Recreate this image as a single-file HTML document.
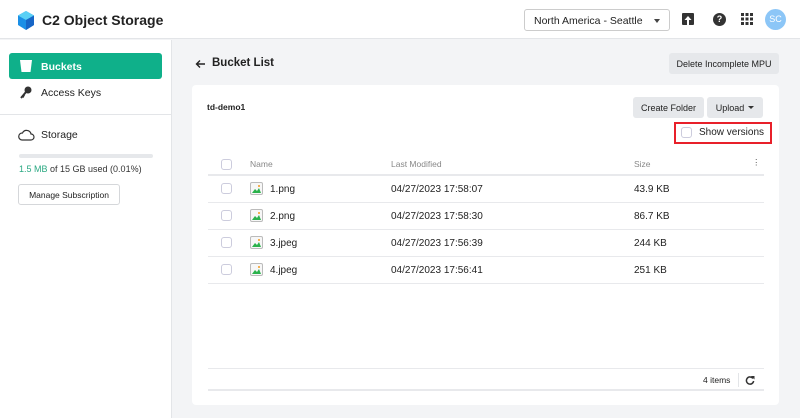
<!DOCTYPE html>
<html><head><style>
*{box-sizing:border-box;margin:0;padding:0}
body{width:800px;height:418px;overflow:hidden;font-family:"Liberation Sans",sans-serif;background:#f3f4f6;position:relative;color:#222}
.abs{position:absolute}
.hdr{left:0;top:0;width:800px;height:39px;background:#fff;border-bottom:1px solid #e3e5e8}
.side{left:0;top:40px;width:172px;height:378px;background:#fff;border-right:1px solid #e3e5e8}
.btn{background:#e6e8eb;border-radius:3px;font-size:9px;color:#222;display:flex;align-items:center;justify-content:center}
.cb{width:11px;height:11px;border:1px solid #ccd;border-radius:3px;background:#fff}
.row{left:208px;width:556px;height:27px;border-bottom:1px solid #e8e9ec;font-size:10px}
.row span{position:absolute;top:8px}
.ic{width:13px;height:13px;border:1px solid #bbb;border-radius:2px;background:#f7f7f7}
</style></head><body>
<div class="abs hdr"></div>
<svg class="abs" style="left:17px;top:11px" width="18" height="19" viewBox="0 0 18 19"><polygon points="9,0 17,4.5 17,14 9,19 1,14 1,4.5" fill="#1b8fe6"/><polygon points="9,0 17,4.5 9,9 1,4.5" fill="#5ad0f5"/><polygon points="9,9 17,4.5 17,14 9,19" fill="#1766c7"/></svg>
<div class="abs" style="left:42px;top:12px;font-size:14px;font-weight:bold;color:#222">C2 Object Storage</div>
<div class="abs" style="left:524px;top:9px;width:146px;height:22px;border:1px solid #ccc;border-radius:3px;font-size:10.5px;padding:5px 9px;color:#222">North America - Seattle<span style="position:absolute;right:9px;top:9px;border:3.5px solid transparent;border-top:4px solid #444"></span></div>
<svg class="abs" style="left:682px;top:13px" width="12" height="12"><rect x="0" y="0" width="12" height="12" rx="1" fill="#333"/><path d="M6 3L2.5 7H5v5h2V7h2.5z" fill="#fff"/></svg>
<div class="abs" style="left:713px;top:13px;width:13px;height:13px;border-radius:50%;background:#333;color:#fff;font-size:9px;font-weight:bold;text-align:center;line-height:13px">?</div>
<svg class="abs" style="left:741px;top:13px" width="12" height="12" fill="#333"><rect x="0" y="0" width="3" height="3"/><rect x="4.5" y="0" width="3" height="3"/><rect x="9" y="0" width="3" height="3"/><rect x="0" y="4.5" width="3" height="3"/><rect x="4.5" y="4.5" width="3" height="3"/><rect x="9" y="4.5" width="3" height="3"/><rect x="0" y="9" width="3" height="3"/><rect x="4.5" y="9" width="3" height="3"/><rect x="9" y="9" width="3" height="3"/></svg>
<div class="abs" style="left:765px;top:9px;width:21px;height:21px;border-radius:50%;background:#8cc6f7;color:#fff;font-size:9px;text-align:center;line-height:21px">SC</div>

<div class="abs side"></div>
<div class="abs" style="left:9px;top:53px;width:153px;height:26px;background:#0fb08a;border-radius:3px"></div>
<svg class="abs" style="left:20px;top:59px" width="12" height="13"><path d="M0 1h12l-1.5 12h-9z" fill="#fff"/></svg>
<div class="abs" style="left:41px;top:61px;font-size:10.5px;font-weight:bold;color:#fff">Buckets</div>
<svg class="abs" style="left:20px;top:86px" width="12" height="13"><circle cx="8" cy="4" r="3.5" fill="#333"/><path d="M6 6L1 12M2 10l2 1M3 9l1.5 1" stroke="#333" stroke-width="2"/></svg>
<div class="abs" style="left:41px;top:87px;font-size:10.5px;color:#222">Access Keys</div>
<div class="abs" style="left:0;top:114px;width:172px;height:1px;background:#e3e5e8"></div>
<svg class="abs" style="left:18px;top:129px" width="17" height="12"><path d="M4 11h9a3 3 0 0 0 0-6 4.5 4.5 0 0 0-8.5-1A3.5 3.5 0 0 0 4 11z" fill="none" stroke="#333" stroke-width="1.2"/></svg>
<div class="abs" style="left:41px;top:129px;font-size:10.5px;color:#222">Storage</div>
<div class="abs" style="left:19px;top:154px;width:134px;height:4px;background:#e6e8eb;border-radius:2px"></div>
<div class="abs" style="left:19px;top:164px;font-size:9px;color:#333"><span style="color:#2aa882">1.5 MB</span> of 15 GB used (0.01%)</div>
<div class="abs" style="left:18px;top:184px;width:102px;height:21px;border:1px solid #d5d7da;border-radius:3px;font-size:8.5px;display:flex;align-items:center;justify-content:center;color:#222">Manage Subscription</div>

<svg class="abs" style="left:195px;top:59px" width="11" height="10"><path d="M10 5H1.5M5 1.5L1.5 5 5 8.5" stroke="#222" stroke-width="1.4" fill="none"/></svg>
<div class="abs" style="left:212px;top:57px;font-size:11.5px;font-weight:bold;color:#222">Bucket List</div>
<div class="abs btn" style="left:669px;top:53px;width:110px;height:21px">Delete Incomplete MPU</div>

<div class="abs" style="left:192px;top:85px;width:587px;height:320px;background:#fff;border-radius:4px"></div>
<div class="abs" style="left:207px;top:102px;font-size:8.5px;font-weight:bold;color:#222">td-demo1</div>
<div class="abs btn" style="left:633px;top:97px;width:71px;height:21px">Create Folder</div>
<div class="abs btn" style="left:707px;top:97px;width:56px;height:21px">Upload <span style="margin-left:4px;border:3px solid transparent;border-top:3.5px solid #333;margin-top:3px"></span></div>
<div class="abs" style="left:674px;top:122px;width:98px;height:22px;border:2px solid #e8202a"></div>
<div class="abs cb" style="left:681px;top:127px"></div>
<div class="abs" style="left:699px;top:127px;font-size:10px;color:#222;line-height:12px">Show versions</div>

<div class="abs row" style="top:149px;height:27px;border-bottom-width:2px;color:#888;font-size:8.5px"><div class="abs cb" style="left:13px;top:10px"></div><span style="left:42px;top:10px">Name</span><span style="left:183px;top:10px">Last Modified</span><span style="left:426px;top:10px">Size</span><span style="left:544px;top:8px;color:#555">&#8942;</span></div>
<div class="abs row" style="top:176px"><div class="abs cb" style="left:13px;top:7px"></div><div class="abs ic" style="left:42px;top:6px"><svg width="11" height="11"><path d="M1 10l3-4 2 2 2-3 2 5z" fill="#2bb24c"/><circle cx="8" cy="3" r="1" fill="#f29a1f"/></svg></div><span style="left:62px">1.png</span><span style="left:183px">04/27/2023 17:58:07</span><span style="left:426px">43.9 KB</span></div>
<div class="abs row" style="top:203px"><div class="abs cb" style="left:13px;top:7px"></div><div class="abs ic" style="left:42px;top:6px"><svg width="11" height="11"><path d="M1 10l3-4 2 2 2-3 2 5z" fill="#2bb24c"/><circle cx="8" cy="3" r="1" fill="#f29a1f"/></svg></div><span style="left:62px">2.png</span><span style="left:183px">04/27/2023 17:58:30</span><span style="left:426px">86.7 KB</span></div>
<div class="abs row" style="top:230px"><div class="abs cb" style="left:13px;top:7px"></div><div class="abs ic" style="left:42px;top:6px"><svg width="11" height="11"><path d="M1 10l3-4 2 2 2-3 2 5z" fill="#2bb24c"/><circle cx="8" cy="3" r="1" fill="#f29a1f"/></svg></div><span style="left:62px">3.jpeg</span><span style="left:183px">04/27/2023 17:56:39</span><span style="left:426px">244 KB</span></div>
<div class="abs row" style="top:257px"><div class="abs cb" style="left:13px;top:7px"></div><div class="abs ic" style="left:42px;top:6px"><svg width="11" height="11"><path d="M1 10l3-4 2 2 2-3 2 5z" fill="#2bb24c"/><circle cx="8" cy="3" r="1" fill="#f29a1f"/></svg></div><span style="left:62px">4.jpeg</span><span style="left:183px">04/27/2023 17:56:41</span><span style="left:426px">251 KB</span></div>

<div class="abs" style="left:208px;top:368px;width:556px;height:1px;background:#e8e9ec"></div>
<div class="abs" style="left:208px;top:389px;width:556px;height:2px;background:#e8e9ec"></div>
<div class="abs" style="left:703px;top:375px;font-size:8.5px;color:#222">4 items</div>
<div class="abs" style="left:738px;top:373px;width:1px;height:14px;background:#e3e5e8"></div>
<svg class="abs" style="left:745px;top:375px" width="10" height="10"><path d="M8 3.5A3.6 3.6 0 1 0 8.6 6" stroke="#333" stroke-width="1.5" fill="none"/><path d="M6 1h3.5v3.5z" fill="#333"/></svg>
</body></html>
